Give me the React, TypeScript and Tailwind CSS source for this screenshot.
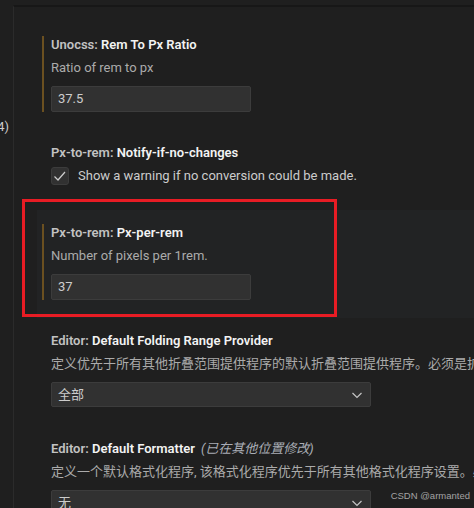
import type { ReactNode } from "react";

// Settings editor fragment (dark theme). Items are laid out in flow; only the
// red annotation box and the watermark sit on top as overlays.

const BAR = "border-[#6b5020]";

function Title({ category, name, note }: { category: string; name: string; note?: string }) {
  return (
    <div className="-mt-[2px] h-[18px] whitespace-nowrap text-[13px] leading-[18px] font-semibold">
      <span className="text-[#c2c2c2]">{category}: </span>
      <span className="text-[#f3f3f3]">{name}</span>
      {note ? <span className="ml-[6px] font-normal italic text-[#a9adb5]">{note}</span> : null}
    </div>
  );
}

function Desc({ children }: { children: ReactNode }) {
  return (
    <div className="mt-[5px] h-[18px] overflow-hidden whitespace-nowrap text-[13px] leading-[18px] text-[#ababab]">
      {children}
    </div>
  );
}

function Item({ modified, children }: { modified?: boolean; children: ReactNode }) {
  return (
    <div className="ml-[23px] pl-[5px] pt-[16px]">
      <div className={`border-l-2 pl-[7px] ${modified ? BAR : "border-transparent"}`}>{children}</div>
    </div>
  );
}

function TextInput({ value }: { value: string }) {
  return (
    <div className="mt-[9px] flex h-[26px] w-[200px] items-center rounded-[2px] border border-[#3c3c3c] bg-[#313131] px-[6px] text-[13px] text-[#cccccc]">
      {value}
    </div>
  );
}

function Select({ value }: { value: string }) {
  return (
    <div className="mt-[9px] flex h-[25px] w-[320px] items-center justify-between rounded-[2px] border border-[#3c3c3c] bg-[#313131] pl-[6px] pr-[5px] text-[13px] text-[#cccccc]">
      <span>{value}</span>
      <svg width="16" height="16" viewBox="0 0 16 16" fill="none">
        <path d="M3.5 6l4.5 4.5L12.5 6" stroke="#c5c5c5" strokeWidth="1.2" />
      </svg>
    </div>
  );
}

export default function App() {
  return (
    <div className="relative flex h-[508px] w-[474px] overflow-hidden bg-[#1f1f1f] font-['Roboto','Noto_Sans_CJK_SC',sans-serif]">
      {/* table of contents, clipped */}
      <div className="flex w-[13px] shrink-0 justify-end overflow-hidden pt-[118px] pr-[4px]">
        <span className="whitespace-nowrap text-[13px] leading-[18px] text-[#cccccc]">(4)</span>
      </div>

      <div className="mt-[5px] flex-1 border-t-2 border-l border-t-[#171717] border-l-[#2b2b2b] pt-[15px]">
        <div className="h-[108px]">
          <Item modified>
            <Title category="Unocss" name="Rem To Px Ratio" />
            <Desc>Ratio of rem to px</Desc>
            <TextInput value="37.5" />
          </Item>
        </div>

        <div className="h-[80px]">
          <Item>
            <Title category="Px-to-rem" name="Notify-if-no-changes" />
            <div className="mt-[5px] flex items-center gap-[9px]">
              <div className="flex h-[18px] w-[18px] items-center justify-center rounded-[3px] border border-[#3c3c3c] bg-[#313131]">
                <svg width="16" height="16" viewBox="0 0 16 16" fill="none">
                  <path d="M2.5 8.5l3.5 3.5 7-8" stroke="#cccccc" strokeWidth="1.2" />
                </svg>
              </div>
              <span className="whitespace-nowrap text-[13px] leading-[18px] text-[#cccccc]">
                Show a warning if no conversion could be made.
              </span>
            </div>
          </Item>
        </div>

        <div className="h-[108px]">
          <div className="ml-[23px] h-full bg-[#222324] pl-[5px] pt-[16px]">
            <div className={`border-l-2 pl-[7px] ${BAR}`}>
              <Title category="Px-to-rem" name="Px-per-rem" />
              <Desc>Number of pixels per 1rem.</Desc>
              <TextInput value="37" />
            </div>
          </div>
        </div>

        <div className="h-[108px]">
          <Item>
            <Title category="Editor" name="Default Folding Range Provider" />
            <Desc>定义优先于所有其他折叠范围提供程序的默认折叠范围提供程序。必须是扩展的标识符。</Desc>
            <Select value="全部" />
          </Item>
        </div>

        <div className="h-[108px]">
          <Item>
            <Title category="Editor" name="Default Formatter" note="(已在其他位置修改)" />
            <Desc>定义一个默认格式化程序, 该格式化程序优先于所有其他格式化程序设置。必须是提供格式化程序的扩展的标识符。</Desc>
            <Select value="无" />
          </Item>
        </div>
      </div>

      {/* red annotation box */}
      <div className="absolute left-[22px] top-[199px] h-[118px] w-[315px] border-[3px] border-[#e81c24]" />

      {/* watermark */}
      <div className="absolute right-[4px] top-[489px] font-['Liberation_Sans',sans-serif] text-[9.5px] leading-[14px] text-[#a3a3a3]">
        CSDN @armanted
      </div>
    </div>
  );
}
